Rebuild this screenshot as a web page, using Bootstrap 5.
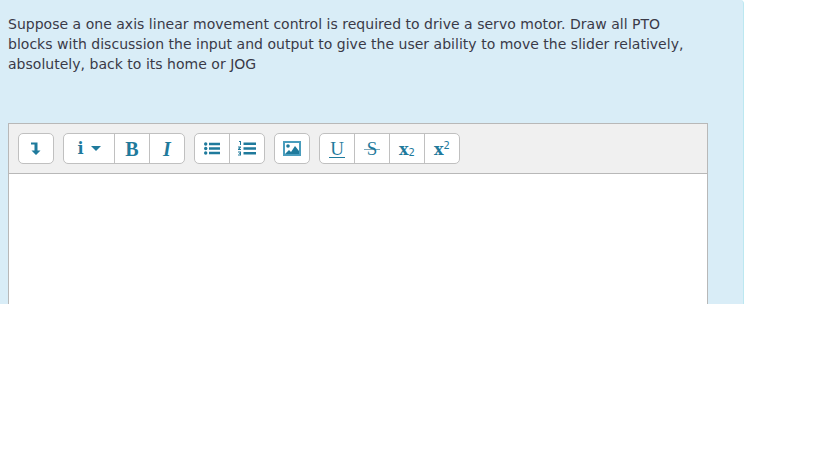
<!DOCTYPE html>
<html lang="en">
<head>
  <meta charset="UTF-8">
  <title>Question</title>
  <link href="https://cdn.jsdelivr.net/npm/bootstrap@5.3.3/dist/css/bootstrap.min.css" rel="stylesheet">
  <style>
    body { background: #fff; overflow: hidden; }
    .question-panel { width: 744px; height: 304px; overflow: hidden; background: #d9edf7; border-right: 1px solid #bce8f1; border-top-right-radius: 4px; padding: 14px 35px 0 8px; }
    .question-text { font-family: "DejaVu Sans", sans-serif; font-size: 14px; letter-spacing: .02px; line-height: 20px; color: #3a3a48; height: 109px; margin: 0; white-space: nowrap; }
    .editor-box { border: 1px solid #b8b8b8; background: #fff; height: 240px; }
    .editor-bar { background: #f0f0f0; border-bottom: 1px solid #b8b8b8; height: 50px; padding: 9px 9px; gap: 9px; }
    .bar-group { height: 31px; background: #fff; border: 1px solid #c0c0c0; border-radius: 5px; }
    .bar-btn { width: 35px; height: 100%; color: #1f7a9c; font-family: "Liberation Serif", serif; font-size: 20px; line-height: 1; border-left: 1px solid #c0c0c0; }
    .bar-btn:first-child { width: 34px; border-left: 0; }
    .bar-btn.wide { width: 50px; gap: 7px; }
    .bar-btn.sans { font-family: "DejaVu Serif", serif; font-weight: 700; font-size: 16px; padding-top: 3px; }
    .bar-btn sub, .bar-btn sup { font-family: "DejaVu Sans", sans-serif; font-size: 10px; font-weight: 400; position: static; line-height: 1; }
    .bar-btn sub { align-self: flex-end; margin-bottom: 5px; }
    .bar-btn sup { align-self: flex-start; margin-top: 4px; }
    .bar-btn svg { display: block; }
    .under-mark { font-size: 19px; line-height: 17px; padding: 0 1px; border-bottom: 1px solid #1f7a9c; }
    .strike-mark { font-size: 19px; padding: 0 3px; background: linear-gradient(#7fa9ba, #7fa9ba) center 10px / 100% 1px no-repeat; }
    .info-mark { font-family: "DejaVu Serif", serif; font-weight: 700; font-size: 16px; }
  </style>
</head>
<body>
  <div class="question-panel">
    <p class="question-text">Suppose a one axis linear movement control is required to drive a servo motor. Draw all PTO<br>blocks with discussion the input and output to give the user ability to move the slider relatively,<br>absolutely, back to its home or JOG</p>
    <div class="editor-box">
      <div class="editor-bar d-flex">
        <div class="bar-group d-flex">
          <div class="bar-btn d-flex align-items-center justify-content-center">
            <svg width="10" height="13" viewBox="0 0 10 13"><path d="M0 .5h6.500V8.500H9.500L5 13 .5 8.500H3.500V2.500H0z" fill="#1f7a9c"/></svg>
          </div>
        </div>
        <div class="bar-group d-flex">
          <div class="bar-btn wide d-flex align-items-center justify-content-center">
            <span class="info-mark">i</span>
            <svg width="10" height="5" viewBox="0 0 10 5"><path d="M0 0h10L5 5z" fill="#1f7a9c"/></svg>
          </div>
          <div class="bar-btn d-flex align-items-center justify-content-center fw-bold">B</div>
          <div class="bar-btn d-flex align-items-center justify-content-center fst-italic fw-bold">I</div>
        </div>
        <div class="bar-group d-flex">
          <div class="bar-btn d-flex align-items-center justify-content-center">
            <svg width="16" height="13" viewBox="0 0 16 13" fill="#1f7a9c"><circle cx="1.700" cy="2" r="1.700"/><circle cx="1.700" cy="6.500" r="1.700"/><circle cx="1.700" cy="11" r="1.700"/><path d="M5 .8h11v2.500H5zM5 5.300h11v2.500H5zM5 9.800h11v2.500H5z"/></svg>
          </div>
          <div class="bar-btn d-flex align-items-center justify-content-center">
            <svg width="18" height="15" viewBox="0 0 18 15" fill="#1f7a9c"><path d="M5.500 1.500h12.500V4H5.500zM5.500 6.300h12.500v2.500H5.500zM5.500 11h12.500v2.500H5.500z"/><path d="M1 0h2v4H2V1H1zM0 5.500h3v1L1.500 8H3v1H0V8l1.500-1.500H0zM0 10.500h3v4H0v-1h2V13H1v-.8h1v-.7H0z"/></svg>
          </div>
        </div>
        <div class="bar-group d-flex">
          <div class="bar-btn d-flex align-items-center justify-content-center">
            <svg width="18" height="15" viewBox="0 0 18 15"><rect x="1" y="1" width="16" height="13" fill="#fff" stroke="#4a9dbd" stroke-width="2"/><circle cx="5" cy="5" r="1.800" fill="#1f7a9c"/><path d="M2 13l4-4 2 2 4-6 4 5v3z" fill="#1f7a9c"/></svg>
          </div>
        </div>
        <div class="bar-group d-flex">
          <div class="bar-btn d-flex align-items-center justify-content-center"><span class="under-mark">U</span></div>
          <div class="bar-btn d-flex align-items-center justify-content-center"><span class="strike-mark">S</span></div>
          <div class="bar-btn sans d-flex align-items-center justify-content-center">x<sub>2</sub></div>
          <div class="bar-btn sans d-flex align-items-center justify-content-center">x<sup>2</sup></div>
        </div>
      </div>
    </div>
  </div>
  <script src="https://cdn.jsdelivr.net/npm/bootstrap@5.3.3/dist/js/bootstrap.bundle.min.js"></script>
</body>
</html>
